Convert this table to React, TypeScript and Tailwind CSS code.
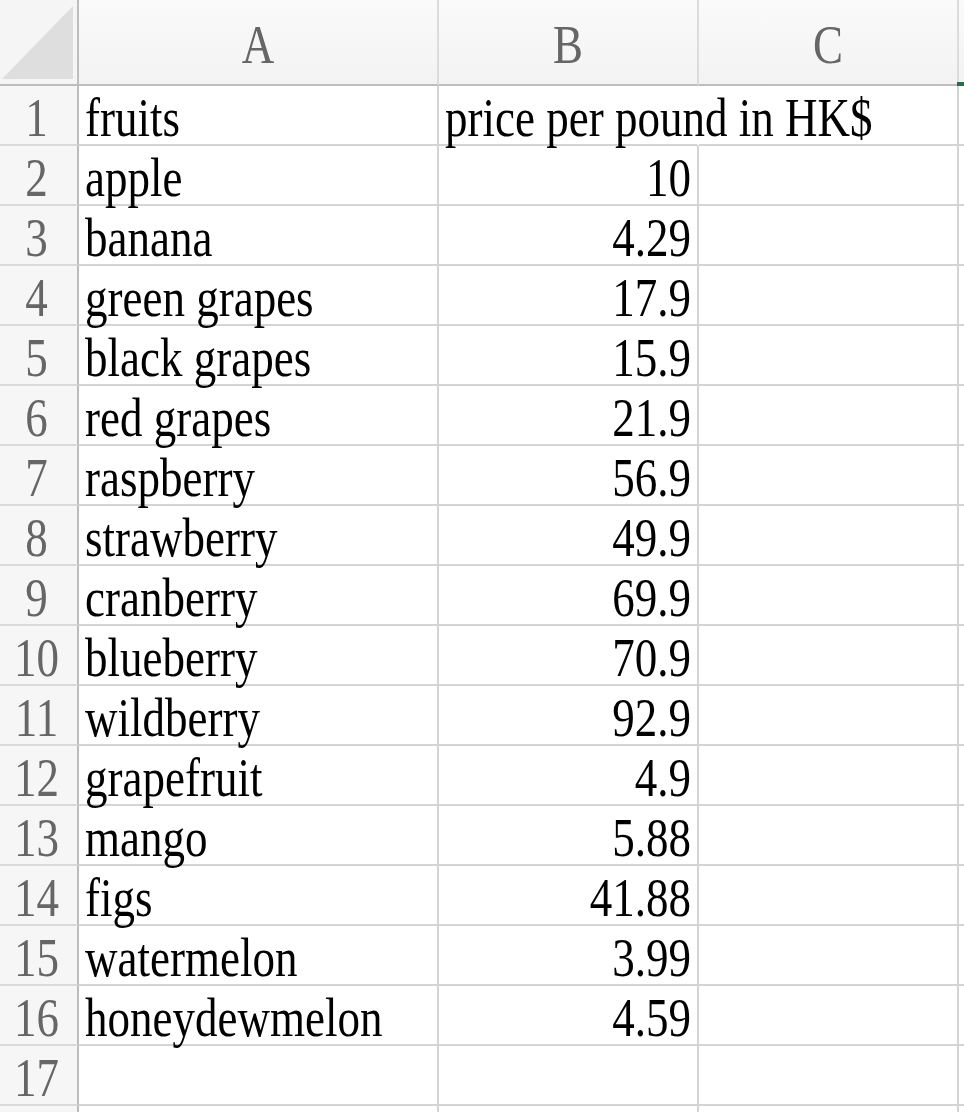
import React from "react";

const rows: [string, string][] = [
  ["fruits", "price per pound in HK$"],
  ["apple", "10"],
  ["banana", "4.29"],
  ["green grapes", "17.9"],
  ["black grapes", "15.9"],
  ["red grapes", "21.9"],
  ["raspberry", "56.9"],
  ["strawberry", "49.9"],
  ["cranberry", "69.9"],
  ["blueberry", "70.9"],
  ["wildberry", "92.9"],
  ["grapefruit", "4.9"],
  ["mango", "5.88"],
  ["figs", "41.88"],
  ["watermelon", "3.99"],
  ["honeydewmelon", "4.59"],
  ["", ""],
  ["", ""],
];

export default function App() {
  return (
    <div className="h-[1112px] w-[964px] overflow-hidden bg-white [font-family:'Liberation_Serif','Times_New_Roman',serif] text-[45px] leading-[44px]">
      {/* Column header row */}
      <div className="flex h-[86px]">
        <div className="relative h-full w-[79px] shrink-0 border-r-2 border-b-2 border-[#bdbdbd] bg-[#f5f5f5]">
          <svg className="absolute left-0 top-0" width="77" height="84" viewBox="0 0 77 84">
            <polygon points="73,6 73,79 2,79" fill="#dedede" />
          </svg>
        </div>
        {["A", "B", "C"].map((l, i) => (
          <div
            key={l}
            className={`flex h-full shrink-0 items-center justify-center border-r-2 border-b-2 border-r-[#dcdcdc] border-b-[#bdbdbd] bg-gradient-to-b from-[#fafafa] to-[#f3f3f3] pt-[6px] text-[#666666] ${
              i === 0 ? "w-[360px]" : "w-[260px]"
            }`}
          >
            <span className="inline-block origin-center scale-y-[1.2]">{l}</span>
          </div>
        ))}
        <div className="relative h-full flex-1 border-b-2 border-[#bdbdbd] bg-gradient-to-b from-[#fafafa] to-[#f3f3f3]">
          <div className="absolute left-[-2px] top-[82px] h-[4px] w-[8px] bg-[#217346]" />
        </div>
      </div>
      {rows.map(([a, b], idx) => (
        <div key={idx} className="flex h-[60px]">
          <div className="flex h-full w-[79px] shrink-0 items-end justify-center border-r-2 border-b-2 border-r-[#bdbdbd] border-b-[#dadada] bg-[#f6f6f6] pr-[4px] text-[#666666]">
            {idx < 17 && <span className="inline-block origin-bottom scale-y-[1.2]">{idx + 1}</span>}
          </div>
          <div className="flex h-full w-[360px] shrink-0 items-end whitespace-nowrap border-r-2 border-b-2 border-[#d4d4d4] pl-[6px] text-black">
            <span className="inline-block origin-bottom scale-y-[1.2]">{a}</span>
          </div>
          <div
            className={`flex h-full w-[260px] shrink-0 items-end whitespace-nowrap border-r-2 border-b-2 border-b-[#d4d4d4] pr-[6px] text-black ${
              idx === 0
                ? "relative z-10 justify-start overflow-visible border-r-transparent pl-[6px]"
                : "justify-end border-r-[#d4d4d4]"
            }`}
          >
            <span className="inline-block origin-bottom scale-y-[1.2]">{b}</span>
          </div>
          <div className="h-full w-[260px] shrink-0 border-r-2 border-b-2 border-[#d4d4d4]" />
          <div className="h-full flex-1 border-b-2 border-[#d4d4d4]" />
        </div>
      ))}
    </div>
  );
}
